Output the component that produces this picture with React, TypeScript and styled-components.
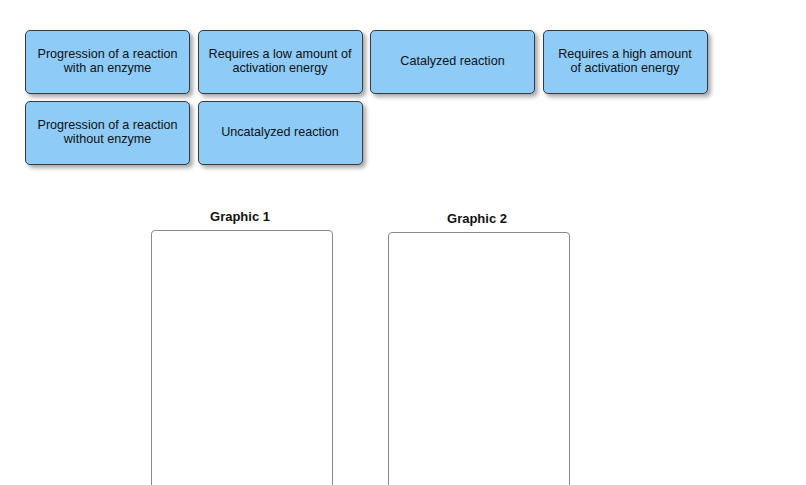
import styled, { createGlobalStyle } from "styled-components";

const GlobalStyle = createGlobalStyle`
  html, body {
    margin: 0;
    padding: 0;
    background: #ffffff;
    font-family: "Liberation Sans", Arial, sans-serif;
    overflow: hidden;
  }
`;

const Page = styled.div`
  width: 806px;
  height: 485px;
  overflow: hidden;
`;

const TileBank = styled.div`
  display: grid;
  grid-template-columns: repeat(4, 165px);
  grid-auto-rows: 64px;
  column-gap: 7.5px;
  row-gap: 7px;
  padding: 30px 0 0 25px;
`;

const Tile = styled.div`
  box-sizing: border-box;
  display: flex;
  align-items: center;
  justify-content: center;
  padding: 0 9px 3px;
  background: #8ecbf7;
  border: 1px solid #3a3a3a;
  border-radius: 5px;
  box-shadow: 3px 3px 4px rgba(0, 0, 0, 0.35);
  color: #111;
  font-size: 12.6px;
  line-height: 14px;
  text-align: center;
`;

const Targets = styled.div`
  display: flex;
  gap: 55px;
  padding: 45px 0 0 151px;
`;

const Target = styled.div<{ $offset: number }>`
  display: flex;
  flex-direction: column;
  align-items: center;
  width: 182px;
  margin-top: ${(p) => p.$offset}px;
`;

const Label = styled.div`
  font-size: 13px;
  font-weight: bold;
  color: #111;
  line-height: 14px;
  margin-bottom: 6px;
  margin-right: 4px;
`;

const DropZone = styled.div`
  box-sizing: border-box;
  width: 100%;
  height: 320px;
  border: 1px solid #8a8a8a;
  border-radius: 4px;
  background: #fff;
`;

const tiles = [
  "Progression of a reaction with an enzyme",
  "Requires a low amount of activation energy",
  "Catalyzed reaction",
  "Requires a high amount of activation energy",
  "Progression of a reaction without enzyme",
  "Uncatalyzed reaction",
];

export default function App() {
  return (
    <Page>
      <GlobalStyle />
      <TileBank>
        {tiles.map((t) => (
          <Tile key={t}>{t}</Tile>
        ))}
      </TileBank>
      <Targets>
        <Target $offset={0}>
          <Label>Graphic 1</Label>
          <DropZone />
        </Target>
        <Target $offset={2}>
          <Label>Graphic 2</Label>
          <DropZone />
        </Target>
      </Targets>
    </Page>
  );
}
